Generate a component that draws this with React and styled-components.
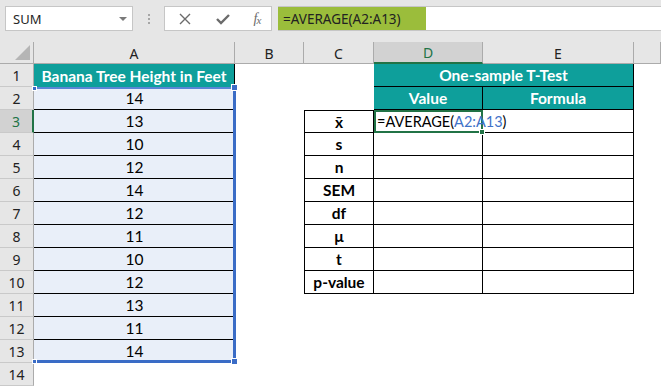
import React from "react";
import styled, { createGlobalStyle, css } from "styled-components";

const Global = createGlobalStyle`
  body {
    margin: 0;
    background: #fff;
    overflow: hidden;
  }
`;

const Page = styled.div`
  width: 661px;
  height: 387px;
  overflow: hidden;
  font-family: "Noto Sans", "Open Sans", sans-serif;
`;

const Toolbar = styled.div`
  height: 42px;
  box-sizing: border-box;
  background: #e6e6e6;
  display: flex;
  align-items: flex-start;
  padding-top: 6px;
`;

const NameBox = styled.div`
  margin-left: 5px;
  width: 128px;
  height: 25px;
  box-sizing: border-box;
  background: #fff;
  border: 1px solid #c6c6c6;
  display: flex;
  align-items: center;
  justify-content: space-between;
  padding: 0 5px 0 7px;
  font-size: 13px;
  color: #262626;
`;

const Caret = styled.span`
  width: 0;
  height: 0;
  border-left: 4px solid transparent;
  border-right: 4px solid transparent;
  border-top: 4px solid #7a7a7a;
`;

const Grip = styled.div`
  width: 31px;
  height: 25px;
  display: flex;
  flex-direction: column;
  align-items: center;
  justify-content: center;
  gap: 2px;
  span {
    width: 2px;
    height: 2px;
    background: #a6a6a6;
  }
`;

const FuncBox = styled.div`
  width: 108px;
  height: 25px;
  box-sizing: border-box;
  background: #fff;
  border: 1px solid #c6c6c6;
  display: grid;
  grid-template-columns: 38px 38px 30px;
  align-items: center;
  justify-items: center;
  padding-left: 1px;
`;

const Fx = styled.span`
  font-family: "Liberation Serif", serif;
  font-style: italic;
  font-size: 14px;
  color: #6b6b6b;
  letter-spacing: -1px;
  sub {
    font-size: 11px;
    vertical-align: -1px;
  }
`;

const FormulaBox = styled.div`
  flex: 1;
  margin-left: 6px;
  height: 25px;
  box-sizing: border-box;
  background: #fff;
  border-top: 1px solid #c6c6c6;
  border-bottom: 1px solid #c6c6c6;
  display: flex;
`;

const FormulaText = styled.div`
  width: 148px;
  background: #9bbd3b;
  display: flex;
  align-items: center;
  padding-left: 5px;
  box-sizing: border-box;
  font-size: 13.5px;
  color: #222;
`;

const Sheet = styled.div`
  display: grid;
  grid-template-columns: 34px 201px 69px 70px 109px 151px 1fr;
  grid-template-rows: 22px repeat(14, 23px);
`;

// every item is placed by its own row / column so that the selection frame can overlap
const place = css`
  grid-row: ${(p) => p.$r};
  grid-column: ${(p) => p.$c} / span ${(p) => p.$span || 1};
`;

const Corner = styled.div`
  grid-row: 1;
  grid-column: 1;
  background: #e6e6e6;
  border-right: 1px solid #ababab;
  border-bottom: 1px solid #ababab;
  display: flex;
  align-items: flex-end;
  justify-content: flex-end;
  padding: 0 3px 3px 0;
`;

const ColHead = styled.div`
  ${place}
  background: ${(p) => (p.$active ? "#d2d2d2" : "#e6e6e6")};
  border-right: 1px solid #ababab;
  border-bottom: ${(p) => (p.$active ? "2px solid #217346" : "1px solid #ababab")};
  color: ${(p) => (p.$active ? "#217346" : "#222")};
  display: flex;
  align-items: center;
  justify-content: center;
  font-size: 14px;
  padding-top: 1px;
`;

const RowHead = styled.div`
  ${place}
  background: ${(p) => (p.$active ? "#d2d2d2" : "#e6e6e6")};
  border-right: ${(p) => (p.$active ? "2px solid #217346" : "1px solid #ababab")};
  border-bottom: 1px solid #c9c9c9;
  color: ${(p) => (p.$active ? "#217346" : "#222")};
  display: flex;
  align-items: center;
  justify-content: center;
  font-size: 14px;
`;

const line = "1px solid #000";

const Cell = styled.div`
  ${place}
  background: ${(p) => p.$bg || "transparent"};
  color: ${(p) => p.$color || "#000"};
  font-family: "Lato", "Liberation Sans", sans-serif;
  font-size: ${(p) => (p.$bold ? "15.5px" : "15.5px")};
  font-weight: ${(p) => (p.$bold ? 700 : 400)};
  display: flex;
  align-items: center;
  justify-content: center;
  white-space: nowrap;
  border-top: ${(p) => (p.$b && p.$b.includes("t") ? line : "none")};
  border-right: ${(p) => (p.$b && p.$b.includes("r") ? line : "none")};
  border-bottom: ${(p) => (p.$b && p.$b.includes("b") ? line : "none")};
  border-left: ${(p) => (p.$b && p.$b.includes("l") ? line : "none")};
`;

const ActiveCell = styled.div`
  ${place}
  position: relative;
  border: 2px solid #217346;
  font-family: "Lato", "Liberation Sans", sans-serif;
  font-size: 14.5px;
  display: flex;
  align-items: center;
  padding-left: 1px;
  white-space: nowrap;
  overflow: visible;
  z-index: 1;
  color: #000;
`;

const Ref = styled.span`
  color: #3f72c8;
`;

const Handle = styled.span`
  position: absolute;
  width: ${(p) => p.$size || 5}px;
  height: ${(p) => p.$size || 5}px;
  background: ${(p) => p.$color};
  border: 1px solid #fff;
  ${(p) => p.$pos}
`;

const Selection = styled.div`
  grid-column: 2;
  grid-row: 3 / 15;
  position: relative;
  border-top: 2px solid #5a86d6;
  border-right: 3px solid #3a6cc6;
  border-bottom: 3px solid #3a6cc6;
  margin-right: -1px;
  z-index: 2;
  pointer-events: none;
`;

const heights = [14, 13, 10, 12, 14, 12, 11, 10, 12, 13, 11, 14];
const labels = ["x\u0304", "s", "n", "SEM", "df", "\u00b5", "t", "p-value"];
const cols = ["A", "B", "C", "D", "E", ""];
const teal = "#0e9f9b";

function rowCells(r) {
  const g = r + 1; // grid row (header row is 1)
  const cells = [
    <RowHead key={`h${r}`} $r={g} $c={1} $active={r === 3}>
      {r}
    </RowHead>,
  ];
  // column A
  if (r === 1) {
    cells.push(
      <Cell key={`a${r}`} $r={g} $c={2} $bg={teal} $color="#fff" $bold $b="r">
        Banana Tree Height in Feet
      </Cell>
    );
  } else if (r <= 13) {
    cells.push(
      <Cell key={`a${r}`} $r={g} $c={2} $bg="#e9eff9" $b="b">
        {heights[r - 2]}
      </Cell>
    );
  }
  // column C
  if (r >= 3 && r <= 10) {
    cells.push(
      <Cell key={`c${r}`} $r={g} $c={4} $bold $b={r === 3 ? "tlrb" : "lrb"}>
        {labels[r - 3]}
      </Cell>
    );
  }
  // columns D, E
  if (r === 1) {
    cells.push(
      <Cell key={`d${r}`} $r={g} $c={5} $span={2} $bg={teal} $color="#fff" $bold $b="rb">
        One-sample T-Test
      </Cell>
    );
  } else if (r === 2) {
    cells.push(
      <Cell key={`d${r}`} $r={g} $c={5} $bg={teal} $color="#fff" $bold $b="rb">
        Value
      </Cell>,
      <Cell key={`e${r}`} $r={g} $c={6} $bg={teal} $color="#fff" $bold $b="rb">
        Formula
      </Cell>
    );
  } else if (r === 3) {
    cells.push(
      <ActiveCell key={`d${r}`} $r={g} $c={5}>
        =AVERAGE(<Ref>A2:A13</Ref>)
        <Handle $color="#217346" $size={4} $pos="right: -4px; bottom: -4px;" />
      </ActiveCell>,
      <Cell key={`e${r}`} $r={g} $c={6} $b="rb" />
    );
  } else if (r <= 10) {
    cells.push(
      <Cell key={`d${r}`} $r={g} $c={5} $b="rb" />,
      <Cell key={`e${r}`} $r={g} $c={6} $b="rb" />
    );
  }
  return cells;
}

export default function App() {
  return (
    <Page>
      <Global />
      <Toolbar>
        <NameBox>
          SUM
          <Caret />
        </NameBox>
        <Grip>
          <span />
          <span />
          <span />
        </Grip>
        <FuncBox>
          <svg width="12" height="12" viewBox="0 0 12 12">
            <path d="M1 1 L11 11 M11 1 L1 11" stroke="#6b6b6b" strokeWidth="1.4" fill="none" />
          </svg>
          <svg width="14" height="12" viewBox="0 0 14 12">
            <path d="M1 6 L5 10 L13 2" stroke="#6b6b6b" strokeWidth="2.4" fill="none" />
          </svg>
          <Fx>
            f<sub>x</sub>
          </Fx>
        </FuncBox>
        <FormulaBox>
          <FormulaText>=AVERAGE(A2:A13)</FormulaText>
        </FormulaBox>
      </Toolbar>
      <Sheet>
        <Corner>
          <svg width="15" height="15" viewBox="0 0 15 15">
            <polygon points="15,0 15,15 0,15" fill="#b5b5b5" />
          </svg>
        </Corner>
        {cols.map((c, i) => (
          <ColHead key={i} $r={1} $c={i + 2} $active={c === "D"}>
            {c}
          </ColHead>
        ))}
        {Array.from({ length: 14 }, (_, i) => rowCells(i + 1))}
        <Selection>
          <Handle $color="#3a6cc6" $size={3} $pos="left: -2px; top: -3px;" />
          <Handle $color="#3a6cc6" $size={5} $pos="right: -5px; top: -5px;" />
          <Handle $color="#3a6cc6" $size={3} $pos="left: -2px; bottom: -4px;" />
          <Handle $color="#3a6cc6" $size={5} $pos="right: -5px; bottom: -5px;" />
        </Selection>
      </Sheet>
    </Page>
  );
}
